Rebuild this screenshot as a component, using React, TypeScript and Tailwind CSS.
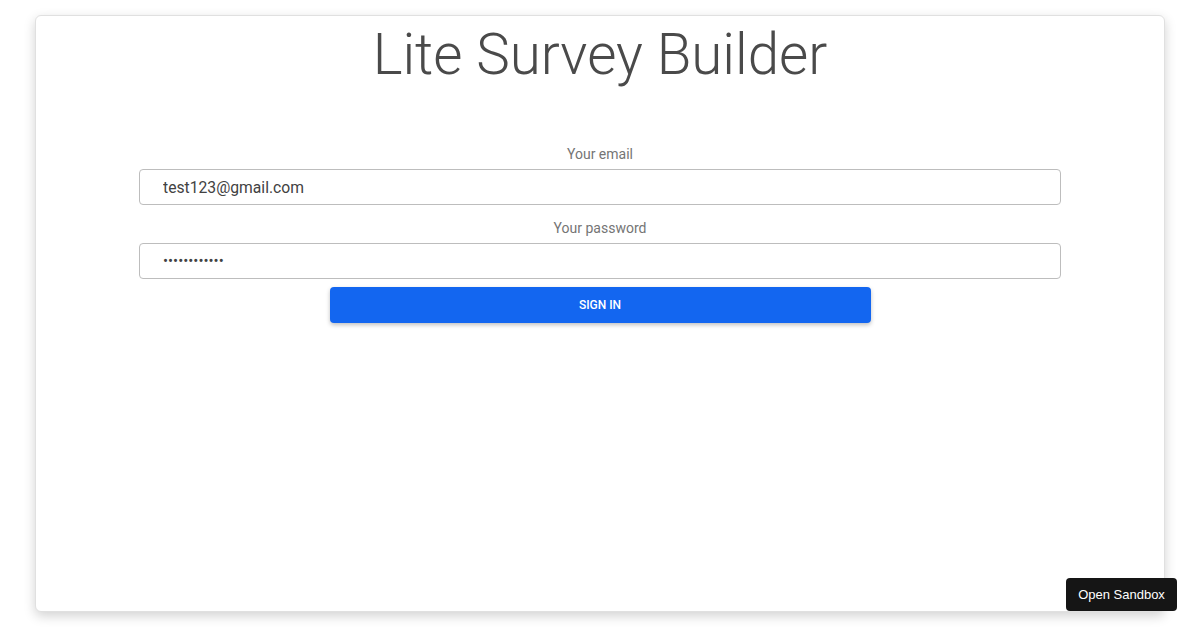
import React from "react";

export default function App() {
  return (
    <div className="relative h-[630px] w-[1200px] bg-white font-['Roboto',sans-serif]">
      <div className="px-[35px] pt-[15px]">
        <main className="flex h-[597px] flex-col items-center rounded-md border border-[#e0e0e0] bg-white shadow-[0_4px_12px_rgba(0,0,0,0.18)]">
          <h1 className="mt-[6px] text-[56.5px] font-light leading-[66px] text-[#4a4a4a]">
            Lite Survey Builder
          </h1>
          <form className="mt-[56px] flex w-[922px] flex-col items-center">
            <label className="mb-[5px] text-sm leading-5 text-[#757575]">Your email</label>
            <input
              type="email"
              defaultValue="test123@gmail.com"
              className="h-9 w-full rounded border border-[#bdbdbd] pl-[23px] pr-6 text-[15.7px] text-[#424242] outline-none"
            />
            <label className="mb-[5px] mt-[13px] text-sm leading-5 text-[#757575]">Your password</label>
            <input
              type="password"
              defaultValue="test12345678"
              className="h-9 w-full rounded border border-[#bdbdbd] pl-[23px] pr-6 text-[15px] text-[#424242] outline-none"
            />
            <button
              type="button"
              className="mt-2 h-9 w-[541px] rounded bg-[#1366f0] text-xs font-medium uppercase text-white shadow-[0_2px_4px_rgba(0,0,0,0.25)]"
            >
              Sign in
            </button>
          </form>
        </main>
      </div>
      <button className="absolute left-[1066px] top-[578px] h-[33px] w-[111px] rounded bg-[#151515] font-['Liberation_Sans',sans-serif] text-[13px] text-white">
        Open Sandbox
      </button>
    </div>
  );
}
